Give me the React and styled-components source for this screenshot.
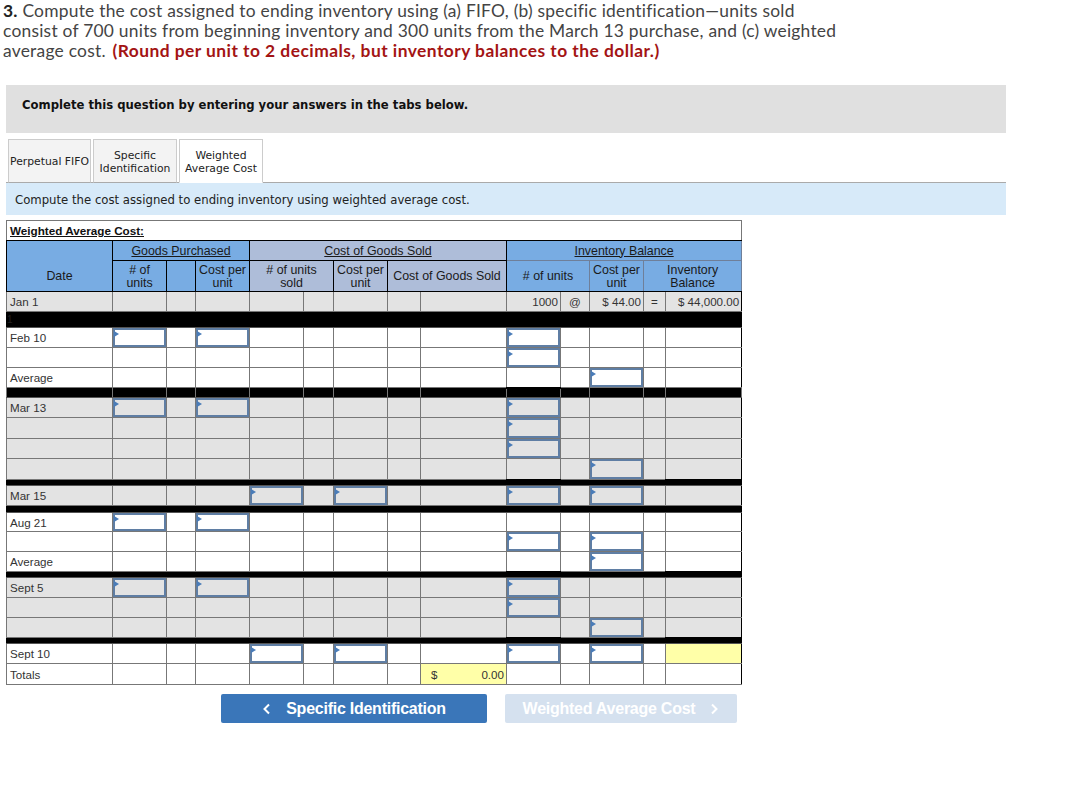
import React from "react";
import styled, { createGlobalStyle, css } from "styled-components";

const Global = createGlobalStyle`
  html, body { margin: 0; padding: 0; background: #fff; }
  body { font-family: "Liberation Sans", Arial, sans-serif; color: #111; }
`;
const Page = styled.div`
  width: 1070px;
  height: 787px;
  overflow: hidden;
  padding: 1px 0 0 0;
  box-sizing: border-box;
`;
const Question = styled.p`
  margin: 0 0 0 3px;
  width: 838px;
  font-family: Lato, sans-serif;
  font-size: 17.4px;
  letter-spacing: 0.24px;
  line-height: 20px;
  color: #444;
  b { font-weight: 700; color: #222; }
  strong { font-weight: 700; color: #a31414; letter-spacing: 0.46px; margin-left: 2px; }
`;
const Banner = styled.div`
  margin: 24px 0 0 6px;
  width: 1000px;
  height: 48px;
  background: #e0e0e0;
  box-sizing: border-box;
  padding: 12px 0 0 16px;
  font-family: "DejaVu Sans", sans-serif;
  font-weight: 700;
  font-size: 11.65px;
  line-height: 16px;
  color: #111;
`;
const Tabs = styled.div`
  margin: 6px 0 0 6px;
  width: 1000px;
  height: 44px;
  box-sizing: border-box;
  padding-left: 2px;
  display: flex;
  gap: 2px;
  border-bottom: 1px solid #aaa;
`;
const Tab = styled.div`
  width: ${p => p.$w}px;
  height: 44px;
  box-sizing: border-box;
  border: 1px solid #ccc;
  border-bottom: ${p => (p.$active ? "1px solid #fff" : "1px solid #aaa")};
  background: ${p => (p.$active ? "#fff" : "#f3f3f3")};
  padding-top: ${p => (p.$twoLines ? "2px" : "0")};
  display: flex;
  align-items: center;
  justify-content: center;
  text-align: center;
  font-family: "DejaVu Sans", sans-serif;
  font-size: 10.8px;
  line-height: 13px;
  color: #222;
  white-space: pre-line;
`;
const Instruction = styled.div`
  margin-left: 6px;
  width: 1000px;
  height: 32px;
  box-sizing: border-box;
  padding: 10px 0 0 9px;
  background: #d7eaf9;
  font-family: "DejaVu Sans", sans-serif;
  font-size: 11.7px;
  line-height: 15px;
  color: #222;
`;
const Table = styled.table`
  margin: 5px 0 0 6px;
  width: 736px;
  table-layout: fixed;
  border-collapse: collapse;
  font-size: 12px;
  color: #222;
  border-bottom: 1px solid #000;
`;
const TitleCell = styled.td`
  height: 19px;
  padding: 0 0 0 3px;
  border: 1px solid #777;
  border-bottom-color: #000;
  font-weight: 700;
  font-size: 11.7px;
  text-decoration: underline;
  color: #111;
`;
const Head = styled.th`
  padding: ${p => (p.$dropped ? "20px 1px 0" : "1px 1px 0")};
  font-weight: 400;
  font-size: 12.4px;
  line-height: 13px;
  text-align: center;
  color: #1a1a1a;
  background: ${p => (p.$tone === "slate" ? "#aebdd9" : "#78ace3")};
  border: 1px solid ${p => (p.$dark ? "#000" : "#6f7f99")};
  ${p => p.$under && "text-decoration: underline;"}
  ${p => p.$bottomDark && "border-bottom-color: #000;"}
`;
const DataRow = styled.tr`
  height: ${p => p.$h}px;
  background: ${p => (p.$gray ? "#e3e3e3" : "#fff")};
`;
const Bar = styled.tr`
  height: ${p => p.$h}px;
  background: #000;
`;
const Cell = styled.td`
  position: relative;
  padding: 0 2px 0 ${p => (p.$label ? "3px" : "2px")};
  border: 1px solid #777;
  border-left-color: ${p => (p.$strong ? "#000" : "#777")};
  ${p => p.$last && "border-right-color: #000;"}
  ${p => p.$darkTop && "border-top-color: #000;"}
  ${p => p.$thick && "border-bottom: 2px solid #000;"}
  text-align: ${p => p.$align || "left"};
  white-space: nowrap;
  overflow: hidden;
  font-size: 11.6px;
  color: #333;
  ${p => p.$yellow && "background: #ffffa8;"}
  ${p =>
    p.$field &&
    css`
      box-shadow: inset 0 0 0 2px #5f7ea4;
      &::before {
        content: "";
        position: absolute;
        left: 1px;
        top: 3px;
        border-left: 5px solid #4a7cb8;
        border-top: 3px solid transparent;
        border-bottom: 3px solid transparent;
      }
    `}
`;
const BarCell = styled.td`
  padding: 0;
  background: #000;
  border: 1px solid ${p => (p.$lines ? "#777" : "#000")};
  border-top-color: #555;
  border-bottom-color: #555;
  font-size: 10px;
  line-height: 8px;
  color: #222;
`;
const Money = styled.span`
  display: flex;
  justify-content: space-between;
  padding-left: 8px;
`;
const Footer = styled.div`
  margin: 9px 0 0 221px;
  display: flex;
  gap: 18px;
`;
const NavButton = styled.button`
  height: 29px;
  width: ${p => p.$w}px;
  border: 0;
  border-radius: 2px;
  padding: 0;
  background: ${p => (p.$off ? "#d5e1ef" : "#3a76b9")};
  color: #fff;
  font-family: "Liberation Sans", sans-serif;
  font-weight: 700;
  font-size: 16px;
  letter-spacing: -0.25px;
  display: flex;
  align-items: center;
  justify-content: center;
  gap: 15px;
`;

const widths = [106, 54, 29, 54, 54, 30, 54, 33, 86, 54, 29, 54, 22, 76];
const strongCols = new Set([1, 4, 9]);

/* Each row: height, gray band, label, input columns, values, and black rule overrides */
const rows = [
  { kind: "data", h: 20, gray: true, label: "Jan 1", values: { 9: "1000", 10: "@", 11: "$ 44.00", 12: "=", 13: "$ 44,000.00" } },
  { kind: "bar", h: 16, mark: "1" },
  { kind: "data", h: 20, label: "Feb 10", fields: [1, 3, 9] },
  { kind: "data", h: 20, fields: [9] },
  { kind: "data", h: 20, label: "Average", fields: [11], darkTop: [9, 13], thick: [9] },
  { kind: "bar", h: 10, lines: true },
  { kind: "data", h: 20, gray: true, label: "Mar 13", fields: [1, 3, 9] },
  { kind: "data", h: 21, gray: true, fields: [9] },
  { kind: "data", h: 20, gray: true, fields: [9] },
  { kind: "data", h: 21, gray: true, fields: [11], darkTop: [9, 13], thick: [9, 13] },
  { kind: "bar", h: 6 },
  { kind: "data", h: 20, gray: true, label: "Mar 15", fields: [4, 6, 9, 11] },
  { kind: "bar", h: 7 },
  { kind: "data", h: 19, label: "Aug 21", fields: [1, 3] },
  { kind: "data", h: 20, fields: [9, 11] },
  { kind: "data", h: 20, label: "Average", fields: [11], darkTop: [9, 13], thick: [9, 13] },
  { kind: "bar", h: 6 },
  { kind: "data", h: 20, gray: true, label: "Sept 5", fields: [1, 3, 9] },
  { kind: "data", h: 20, gray: true, fields: [9] },
  { kind: "data", h: 20, gray: true, fields: [11], darkTop: [9, 13], thick: [9, 13] },
  { kind: "bar", h: 6 },
  { kind: "data", h: 20, label: "Sept 10", fields: [4, 6, 9, 11], yellow: [13] },
  { kind: "data", h: 21, label: "Totals", yellow: [8], darkTop: [8], money: { 8: ["$", "0.00"] } },
];

const alignFor = col => (col === 10 || col === 12 ? "center" : "right");

function Row({ row }) {
  if (row.kind === "bar") {
    return (
      <Bar $h={row.h}>
        {widths.map((_, i) => (
          <BarCell key={i} $lines={row.lines}>{i === 0 ? row.mark : null}</BarCell>
        ))}
      </Bar>
    );
  }
  const { fields = [], yellow = [], values = {}, money = {}, darkTop = [], thick = [] } = row;
  return (
    <DataRow $h={row.h} $gray={row.gray}>
      <Cell $label>{row.label}</Cell>
      {widths.slice(1).map((_, idx) => {
        const col = idx + 1;
        return (
          <Cell
            key={col}
            $strong={strongCols.has(col)}
            $last={col === 13}
            $field={fields.includes(col)}
            $yellow={yellow.includes(col)}
            $darkTop={darkTop.includes(col)}
            $thick={thick.includes(col)}
            $align={alignFor(col)}
          >
            {money[col] ? (
              <Money>
                <span>{money[col][0]}</span>
                <span>{money[col][1]}</span>
              </Money>
            ) : (
              values[col]
            )}
          </Cell>
        );
      })}
    </DataRow>
  );
}

export default function App() {
  return (
    <Page>
      <Global />
      <Question>
        <b>3.</b> Compute the cost assigned to ending inventory using (a) FIFO, (b) specific identification—units sold
        consist of 700 units from beginning inventory and 300 units from the March 13 purchase, and (c) weighted
        average cost. <strong>(Round per unit to 2 decimals, but inventory balances to the dollar.)</strong>
      </Question>
      <Banner>Complete this question by entering your answers in the tabs below.</Banner>
      <Tabs>
        <Tab $w={83}>Perpetual FIFO</Tab>
        <Tab $w={84} $twoLines>{"Specific\nIdentification"}</Tab>
        <Tab $w={84} $twoLines $active>{"Weighted\nAverage Cost"}</Tab>
      </Tabs>
      <Instruction>Compute the cost assigned to ending inventory using weighted average cost.</Instruction>
      <Table>
        <colgroup>
          {widths.map((w, i) => (
            <col key={i} style={{ width: w }} />
          ))}
        </colgroup>
        <tbody>
          <tr>
            <TitleCell colSpan={14}>Weighted Average Cost:</TitleCell>
          </tr>
          <tr style={{ height: 20 }}>
            <Head rowSpan={2} $dark $dropped>Date</Head>
            <Head colSpan={3} $under $dark>Goods Purchased</Head>
            <Head colSpan={5} $tone="slate" $under $dark>Cost of Goods Sold</Head>
            <Head colSpan={5} $under>Inventory Balance</Head>
          </tr>
          <tr style={{ height: 31 }}>
            <Head $dark>#&nbsp;of<br />units</Head>
            <Head $dark />
            <Head $dark>Cost per<br />unit</Head>
            <Head colSpan={2} $tone="slate" $dark># of units<br />sold</Head>
            <Head $tone="slate" $dark>Cost per<br />unit</Head>
            <Head colSpan={2} $tone="slate" $dark>Cost of Goods Sold</Head>
            <Head colSpan={2} $bottomDark># of units</Head>
            <Head $bottomDark>Cost per<br />unit</Head>
            <Head colSpan={2} $bottomDark>Inventory<br />Balance</Head>
          </tr>
          {rows.map((row, i) => (
            <Row key={i} row={row} />
          ))}
        </tbody>
      </Table>
      <Footer>
        <NavButton $w={266}>
          <svg width="9" height="12" viewBox="0 0 9 12" aria-hidden="true">
            <path d="M7 1.5 2.5 6 7 10.5" fill="none" stroke="#fff" strokeWidth="2" />
          </svg>
          Specific Identification
        </NavButton>
        <NavButton $w={232} $off>
          Weighted Average Cost
          <svg width="9" height="12" viewBox="0 0 9 12" aria-hidden="true">
            <path d="M2 1.5 6.5 6 2 10.5" fill="none" stroke="#fff" strokeWidth="2" />
          </svg>
        </NavButton>
      </Footer>
    </Page>
  );
}
